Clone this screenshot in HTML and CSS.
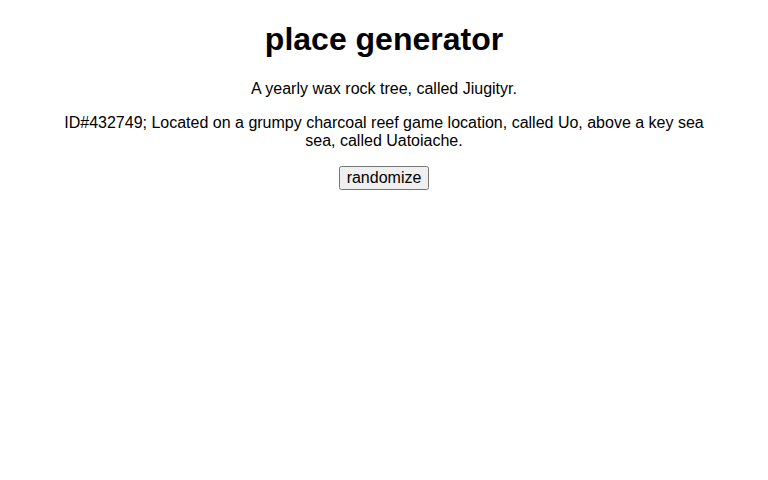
FILE: index.html
```html
<!DOCTYPE html>
<html lang="en">

<head>
    <meta charset="UTF-8">
    <title>place generator</title>
    <link rel="stylesheet" href="styles.css">
</head>

<body>
    <div class="main">
        <h1>place generator</h1>
        <p>A yearly wax rock tree, called Jiugityr.</p>
        <p>ID#432749; Located on a grumpy charcoal reef game location, called Uo, above a key sea sea, called Uatoiache.</p>
        <button class="button">randomize</button>
    </div>
</body>

</html>
```

FILE: styles.css
```css
body {
    margin: 0 8px 8px;
    font-family: 'Liberation Sans', Arial, sans-serif;
    color: black;
    background-color: white;
}

.main {
    text-align: center;
    padding: 0 48px;
}

.button {
    font-family: 'Liberation Sans', Arial, sans-serif;
    font-size: 16px;
}
```
